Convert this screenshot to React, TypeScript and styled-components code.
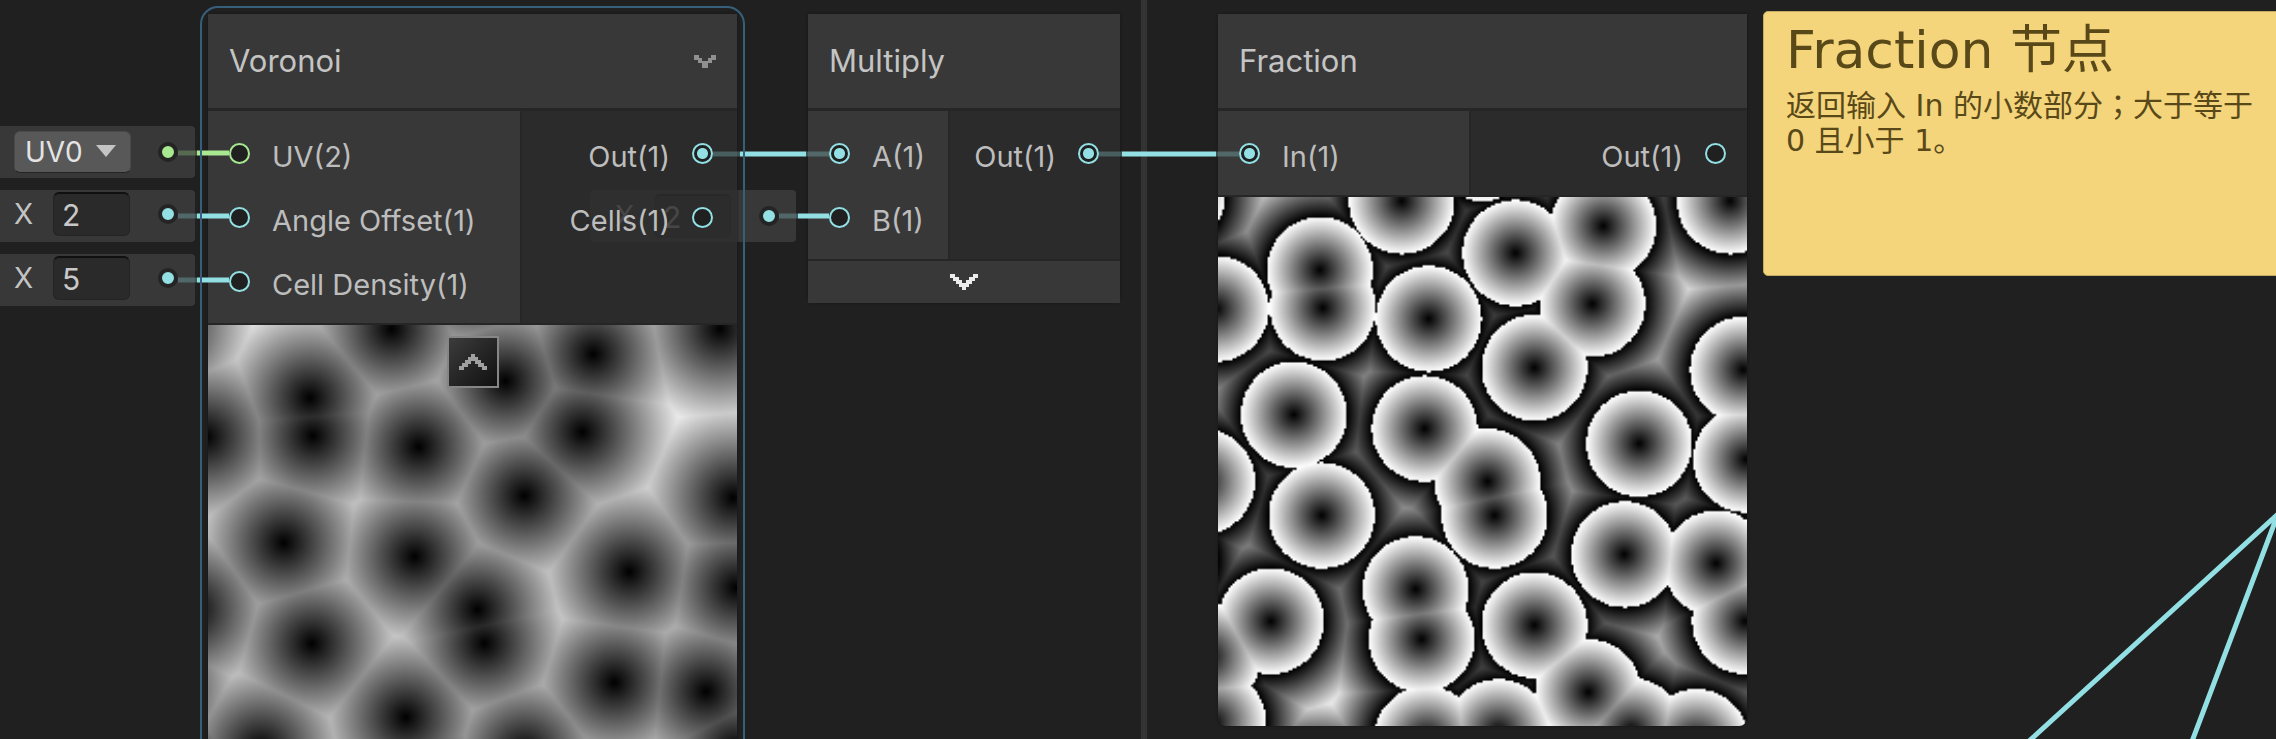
import React, { useLayoutEffect, useRef } from "react";
import styled, { createGlobalStyle } from "styled-components";

const CYAN = "#93e0e4";
const GREEN = "#a8e890";

const GlobalStyle = createGlobalStyle`
  *, *::before, *::after { box-sizing: border-box; }
  body {
    margin: 0;
    background: #202020;
    color: #c4c4c4;
    font-family: Inter, "Liberation Sans", sans-serif;
    font-size: 28px;
  }
`;

const GraphCanvas = styled.main`
  position: relative;
  width: 100%;
  height: 100vh;
  overflow: hidden;
  background: #202020;
`;

const GroupEdge = styled.div`
  position: absolute;
  top: 0;
  bottom: 0;
  left: 1141px;
  width: 6px;
  background: #333333;
`;

/* ---------- inline port values ---------- */

const ValuePill = styled.div<{ $x: number; $y: number; $raised?: boolean }>`
  position: absolute;
  left: ${(p) => p.$x}px;
  top: ${(p) => p.$y}px;
  width: 206px;
  height: 52px;
  padding: 0 17px ${(p) => (p.$raised ? 4 : 0)}px 25px;
  display: flex;
  align-items: center;
  justify-content: space-between;
  background: #383838;
  border-radius: 4px;
`;

const AxisField = styled.label`
  display: flex;
  align-items: center;
  gap: 20px;
`;

const AxisInput = styled.input`
  width: 77px;
  height: 44px;
  padding: 0 8px;
  color: #c8c8c8;
  background: #2a2a2a;
  border: 1px solid #242424;
  border-top: 2px solid #101010;
  border-radius: 6px;
  font: inherit;
  font-size: 30px;
  outline: none;
`;

const SelectBox = styled.div`
  position: relative;
  height: 42px;
`;

const ChannelSelect = styled.select`
  appearance: none;
  width: 117px;
  height: 42px;
  padding: 0 0 0 10px;
  color: #e4e4e4;
  background: #585858;
  border: 1px solid #4a4a4a;
  border-bottom-color: #242424;
  border-radius: 6px;
  font: inherit;
  outline: none;
`;

const SelectArrow = styled.svg`
  position: absolute;
  right: 15px;
  top: 14px;
  width: 20px;
  height: 12px;
  pointer-events: none;
`;

const SocketDot = styled.span<{ $color: string }>`
  width: 20px;
  height: 20px;
  border: 4px solid #242424;
  border-radius: 50%;
  background: ${(p) => p.$color};
`;

/* ---------- nodes ---------- */

const NodeBox = styled.section<{ $x: number; $width: number }>`
  position: absolute;
  left: ${(p) => p.$x}px;
  top: 14px;
  width: ${(p) => p.$width}px;
  border-radius: 2px 2px 8px 8px;
  box-shadow: 0 0 3px #161616;
`;

const NodeHeader = styled.header`
  display: flex;
  align-items: center;
  justify-content: space-between;
  height: 94px;
  padding: 0 21px;
  background: #383838;
`;

const NodeTitle = styled.h2`
  margin: 0;
  font-size: 31px;
  font-weight: 400;
  line-height: 36px;
`;

const PortArea = styled.div<{ $inputs: number }>`
  display: grid;
  grid-template-columns: ${(p) => p.$inputs}px 1fr;
  border-top: 3px solid #262626;
  border-bottom: 2px solid #262626;
`;

const PortColumn = styled.div<{ $side: "in" | "out"; $inset: number }>`
  padding: 10px ${(p) => p.$inset}px;
  background: ${(p) => (p.$side === "in" ? "#383838" : "rgba(45, 45, 45, 0.84)")};
  border-left: ${(p) => (p.$side === "out" ? "2px solid #272727" : "0")};
`;

const PortRow = styled.div<{ $side: "in" | "out" }>`
  display: flex;
  flex-direction: ${(p) => (p.$side === "in" ? "row" : "row-reverse")};
  align-items: center;
  gap: 22px;
  height: 64px;
`;

const PortLabel = styled.span`
  padding-top: 8px;
  color: #bdbdbd;
  font-size: 29px;
  line-height: 34px;
  white-space: nowrap;
`;

const PortRing = styled.span<{ $color: string; $linked?: boolean }>`
  flex: none;
  width: 21px;
  height: 21px;
  border: 2px solid ${(p) => p.$color};
  border-radius: 50%;
  background: ${(p) =>
    p.$linked
      ? `radial-gradient(circle, ${p.$color} 5px, #202020 6px)`
      : "#202020"};
`;

const IconButton = styled.button`
  display: flex;
  align-items: center;
  justify-content: center;
  padding: 0;
  border: 0;
  background: none;
`;

const FoldBar = styled(IconButton)`
  width: 100%;
  height: 42px;
  background: #383838;
`;

const PreviewBox = styled.div`
  position: relative;
  aspect-ratio: 1;
  overflow: hidden;
  border-radius: 0 0 8px 8px;
`;

const PreviewCanvas = styled.canvas`
  display: block;
  width: 100%;
  height: 100%;
`;

const CollapsePreview = styled(IconButton)`
  position: absolute;
  top: 11px;
  left: calc(50% - 26px);
  width: 52px;
  height: 52px;
  border: 2px solid #868686;
  background: linear-gradient(135deg, #3c3c3c, #101010);
`;

const Selection = styled.div`
  position: absolute;
  left: 200px;
  top: 6px;
  width: 545px;
  height: 862px;
  border: 2px solid #365f7c;
  border-radius: 18px;
  pointer-events: none;
`;

const Wires = styled.svg`
  position: absolute;
  inset: 0;
  width: 100%;
  height: 100%;
  pointer-events: none;
`;

/* ---------- sticky note ---------- */

const StickyNote = styled.article`
  position: absolute;
  left: 1763px;
  top: 11px;
  width: 530px;
  height: 265px;
  padding: 6px 26px 6px 22px;
  color: #5a4918;
  background: #f4d57c;
  border: 1px solid #c4ab66;
  border-radius: 5px;
  font-family: "DejaVu Sans", "Noto Sans CJK SC", sans-serif;
`;

const NoteTitle = styled.h1`
  margin: 0 0 6px;
  font-size: 52px;
  font-weight: 400;
  line-height: 64px;
`;

const NoteText = styled.p`
  margin: 0;
  font-size: 30px;
  line-height: 35px;
`;

const CenteredMark = styled.span`
  font-family: "Noto Sans CJK TC", sans-serif;
  line-height: 1;
`;

/* ---------- voronoi preview ---------- */

const CELL = 106;
const EXTENT = 530;
const RES = 256;

// Feature points of the noise, in preview units (530 across, five cells).
const POINTS: [number, number][] = [
  [102, 73], [105, 111], [184, 4], [298, 56], [386, 29], [513, 4], [375, 107],
  [211, 122], [-2, 112], [76, 218], [317, 171], [207, 232], [526, 173],
  [422, 247], [270, 285], [277, 319], [104, 319], [-16, 285], [407, 358],
  [499, 367], [529, 263], [528, 425], [198, 393], [204, 443], [53, 425],
  [-10, 460], [317, 429], [371, 496], [-5, 526], [209, 543], [281, 536],
  [414, 535], [479, 546], [-46, -1], [265, -49], [-53, 364], [100, 608],
];

function Preview({ multiply = 1, label }: { multiply?: number; label: string }) {
  const ref = useRef<HTMLCanvasElement>(null);
  useLayoutEffect(() => {
    const ctx = ref.current?.getContext("2d");
    if (!ctx) return;
    const image = ctx.createImageData(RES, RES);
    for (let y = 0; y < RES; y++) {
      for (let x = 0; x < RES; x++) {
        const px = ((x + 0.5) / RES) * EXTENT;
        const py = ((y + 0.5) / RES) * EXTENT;
        let best = Infinity;
        for (const [cx, cy] of POINTS) {
          best = Math.min(best, Math.hypot(px - cx, py - cy));
        }
        const d = (best / CELL) * multiply;
        const v = multiply === 1 ? Math.min(d, 1) : d % 1;
        const i = (y * RES + x) * 4;
        image.data[i] = image.data[i + 1] = image.data[i + 2] = v * 255;
        image.data[i + 3] = 255;
      }
    }
    ctx.putImageData(image, 0, 0);
  }, [multiply]);
  return <PreviewCanvas ref={ref} width={RES} height={RES} role="img" aria-label={label} />;
}

function Chevron({ color, up }: { color: string; up?: boolean }) {
  return (
    <svg width={28} height={16} viewBox="0 0 28 16" aria-hidden="true">
      <path
        d="M0 0H5V3H9V6H12V9H16V6H19V3H23V0H28V4H25V7H22V10H19V13H16V16H12V13H9V10H6V7H3V4H0Z"
        fill={color}
        transform={up ? "rotate(180 14 8)" : undefined}
      />
    </svg>
  );
}

function SmallChevron() {
  return (
    <svg width={22} height={13} viewBox="0 0 22 13" aria-hidden="true">
      <path d="M0 0H5V3H8V6H14V3H17V0H22V5H18V8H14V13H8V8H4V5H0Z" fill="#909090" />
    </svg>
  );
}

type PortInfo = { name: string; color?: string; linked?: boolean };

function Ports({ side, ports, inset = 21 }: { side: "in" | "out"; ports: PortInfo[]; inset?: number }) {
  return (
    <PortColumn $side={side} $inset={inset}>
      {ports.map((p) => (
        <PortRow key={p.name} $side={side}>
          <PortRing $color={p.color ?? CYAN} $linked={p.linked} />
          <PortLabel>{p.name}</PortLabel>
        </PortRow>
      ))}
    </PortColumn>
  );
}

function ValueField({ x, y, value, raised }: { x: number; y: number; value: string; raised?: boolean }) {
  return (
    <ValuePill $x={x} $y={y} $raised={raised}>
      <AxisField>
        X
        <AxisInput defaultValue={value} />
      </AxisField>
      <SocketDot $color={CYAN} />
    </ValuePill>
  );
}

function Wire({ from, to, y, color = CYAN, fadeStart, fadeEnd }: {
  from: number; to: number; y: number; color?: string; fadeStart: number; fadeEnd: number;
}) {
  return (
    <g stroke={color} strokeWidth={5}>
      <path d={`M${from} ${y}H${fadeStart}M${fadeEnd} ${y}H${to}`} opacity={0.28} />
      <path d={`M${fadeStart} ${y}H${fadeEnd}`} />
    </g>
  );
}

export default function App() {
  return (
    <GraphCanvas>
      <GlobalStyle />
      <GroupEdge />

      <ValuePill $x={-11} $y={126}>
        <SelectBox>
          <ChannelSelect aria-label="UV channel" defaultValue="UV0">
            <option>UV0</option>
            <option>UV1</option>
            <option>UV2</option>
            <option>UV3</option>
          </ChannelSelect>
          <SelectArrow viewBox="0 0 20 12" aria-hidden="true">
            <path d="M0 0H20L10 12Z" fill="#c4c4c4" />
          </SelectArrow>
        </SelectBox>
        <SocketDot $color={GREEN} />
      </ValuePill>
      <ValueField x={-11} y={190} value="2" raised />
      <ValueField x={-11} y={254} value="5" raised />
      <ValueField x={590} y={190} value="2" />

      <NodeBox $x={208} $width={529}>
        <NodeHeader>
          <NodeTitle>Voronoi</NodeTitle>
          <IconButton aria-label="Collapse node">
            <SmallChevron />
          </IconButton>
        </NodeHeader>
        <PortArea $inputs={312}>
          <Ports side="in" ports={[{ name: "UV(2)", color: GREEN }, { name: "Angle Offset(1)" }, { name: "Cell Density(1)" }]} />
          <Ports side="out" inset={24} ports={[{ name: "Out(1)", linked: true }, { name: "Cells(1)" }]} />
        </PortArea>
        <PreviewBox>
          <Preview label="Voronoi preview" />
          <CollapsePreview aria-label="Collapse preview">
            <Chevron color="#a0a0a0" up />
          </CollapsePreview>
        </PreviewBox>
      </NodeBox>

      <NodeBox $x={808} $width={312}>
        <NodeHeader>
          <NodeTitle>Multiply</NodeTitle>
        </NodeHeader>
        <PortArea $inputs={140}>
          <Ports side="in" ports={[{ name: "A(1)", linked: true }, { name: "B(1)" }]} />
          <Ports side="out" ports={[{ name: "Out(1)", linked: true }]} />
        </PortArea>
        <FoldBar aria-label="Expand preview">
          <Chevron color="#ececec" />
        </FoldBar>
      </NodeBox>

      <NodeBox $x={1218} $width={529}>
        <NodeHeader>
          <NodeTitle>Fraction</NodeTitle>
        </NodeHeader>
        <PortArea $inputs={251}>
          <Ports side="in" ports={[{ name: "In(1)", linked: true }]} />
          <Ports side="out" ports={[{ name: "Out(1)" }]} />
        </PortArea>
        <PreviewBox>
          <Preview multiply={2} label="Fraction preview" />
        </PreviewBox>
      </NodeBox>

      <Wires aria-hidden="true">
        <Wire from={178} to={229} y={153} fadeStart={197} fadeEnd={229} color={GREEN} />
        <Wire from={178} to={229} y={216} fadeStart={197} fadeEnd={229} />
        <Wire from={178} to={229} y={280} fadeStart={197} fadeEnd={229} />
        <Wire from={713} to={829} y={154} fadeStart={740} fadeEnd={806} />
        <Wire from={779} to={829} y={216} fadeStart={798} fadeEnd={829} />
        <Wire from={1099} to={1239} y={154} fadeStart={1122} fadeEnd={1216} />
        <path d="M2028 742L2278 514L2191 744" fill="none" stroke={CYAN} strokeWidth={5} />
      </Wires>
      <Selection />

      <StickyNote>
        <NoteTitle>Fraction 节点</NoteTitle>
        <NoteText>
          返回输入 In 的小数部分<CenteredMark lang="zh-Hant">；</CenteredMark>大于等于 0 且小于 1。
        </NoteText>
      </StickyNote>
    </GraphCanvas>
  );
}
